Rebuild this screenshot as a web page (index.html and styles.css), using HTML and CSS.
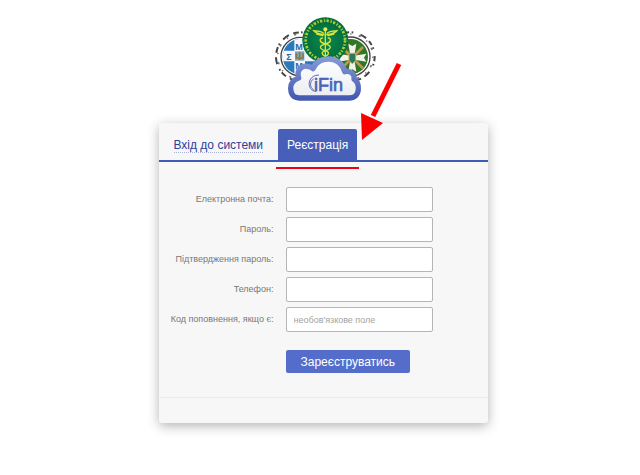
FILE: index.html
```html
<!DOCTYPE html>
<html lang="uk">
<head>
<meta charset="utf-8">
<meta name="viewport" content="width=device-width, initial-scale=1">
<title>iFin</title>
<link rel="stylesheet" href="styles.css">
</head>
<body>
<header class="brand">
  <svg class="logo" viewBox="-6 0 360 300" role="img" aria-label="iFin">
    <defs>
      <linearGradient id="rim" x1="0" y1="0" x2="0" y2="1">
        <stop offset="0" stop-color="#8298d6"/>
        <stop offset="1" stop-color="#4659b2"/>
      </linearGradient>
      <linearGradient id="sky" x1="0" y1="0" x2="0" y2="1">
        <stop offset="0" stop-color="#ffffff"/>
        <stop offset="1" stop-color="#e9ecf1"/>
      </linearGradient>
      <radialGradient id="leaf">
        <stop offset="0" stop-color="#0b8a50"/>
        <stop offset="1" stop-color="#00683a"/>
      </radialGradient>
      <clipPath id="left-disc"><circle cx="106" cy="140" r="53"/></clipPath>
    </defs>
    <!-- statistics seal -->
    <circle cx="106" cy="140" r="73" fill="none" stroke="#444" stroke-width="6" stroke-dasharray="17 7 5 16 21 14"/>
    <circle cx="106" cy="140" r="68" fill="none" stroke="#777" stroke-width="5" stroke-dasharray="4 20 7 24"/>
    <circle cx="106" cy="140" r="58" fill="#fff" stroke="#444" stroke-width="4"/>
    <g clip-path="url(#left-disc)">
      <rect x="50" y="84" width="112" height="112" fill="#2b79bd"/>
      <path d="M88 84h32v112H88zM50 122h112v32H50z" fill="#f4f8fc"/>
      <rect x="90" y="124" width="28" height="28" fill="#7fa6c5"/>
      <path d="M94 130v14h20v-14M104 126v24" fill="none" stroke="#8c7940" stroke-width="5"/>
      <text class="seal" x="102" y="120" text-anchor="middle">M</text>
      <text class="seal" x="72" y="149" text-anchor="middle">Σ</text>
      <text class="seal" x="102" y="178" text-anchor="middle">M</text>
    </g>
    <!-- customs seal -->
    <circle cx="256" cy="140" r="73" fill="none" stroke="#444" stroke-width="6" stroke-dasharray="14 8 5 22 20 12"/>
    <circle cx="256" cy="140" r="68" fill="none" stroke="#777" stroke-width="5" stroke-dasharray="4 22 7 20"/>
    <circle cx="256" cy="140" r="59" fill="#fff" stroke="#444" stroke-width="4"/>
    <circle cx="256" cy="140" r="53" fill="#317629"/>
    <g transform="translate(262 143)">
      <path d="M-32-32L32 32M32-32L-32 32" stroke="#b99b50" stroke-width="8"/>
      <path d="M-12-42l12 7 12-7-6 36 36-6-7 12 7 12-36-6 6 36-12-7-12 7 6-36-36 6 7-12-7-12 36 6z" fill="#f2f2e8"/>
      <path d="M-10-13h20v22l-10 9-10-9z" fill="#2f7954" stroke="#c4a753" stroke-width="3"/>
    </g>
    <!-- tax seal -->
    <circle cx="181" cy="91" r="69" fill="url(#leaf)"/>
    <circle cx="181" cy="91" r="59" fill="none" stroke="#a8ce3d" stroke-width="8" stroke-dasharray="7 5 4 4"/>
    <circle cx="181" cy="91" r="65" fill="none" stroke="#4e942e" stroke-width="3" stroke-dasharray="5 6"/>
    <g fill="none" stroke="#d6e33c" stroke-width="4" stroke-linecap="round">
      <path d="M181 58v86"/>
      <path d="M177 74c-10-3-24-2-31-12 10 2 20-1 29 7M185 74c10-3 24-2 31-12-10 2-20-1-29 7M155 72l18 5M207 72l-18 5"/>
      <path d="M172 84c-11 3-8 14 9 18 20 5 19 14 0 20-15 5-10 12 0 17M190 84c11 3 8 14-9 18-20 5-19 14 0 20 15 5 10 12 0 17"/>
    </g>
    <circle cx="181" cy="58" r="6" fill="#e6ed55"/>
    <!-- cloud -->
    <path d="M103 264C82 264 77 248 77 235C77 218 88 208 101 204C94 182 109 166 127 169C134 170 140 172 144 176C153 155 169 147 190 147C216 147 234 163 239 185C256 181 270 192 267 208C277 214 281 225 280 238C279 254 268 264 252 264Z" fill="url(#sky)" stroke="url(#rim)" stroke-width="16" stroke-linejoin="round"/>
    <path d="M162 195c-38 0-38 49-8 49M146 206c-13 9-12 27 0 33" fill="none" stroke="#5268bd" stroke-width="3"/>
    <text class="wordmark" x="147" y="242">iFin</text>
  </svg>
</header>

<main class="card">
  <nav class="tabs">
    <a class="tab" href="#login"><span class="tab-label">Вхід до системи</span></a>
    <a class="tab tab-active" href="#register" aria-current="page">Реєстрація</a>
  </nav>
  <form class="form">
    <label class="label" for="email">Електронна почта:</label>
    <input class="field" id="email" type="email">
    <label class="label" for="password">Пароль:</label>
    <input class="field" id="password" type="password">
    <label class="label" for="confirm">Підтвердження пароль:</label>
    <input class="field" id="confirm" type="password">
    <label class="label" for="phone">Телефон:</label>
    <input class="field" id="phone" type="tel">
    <label class="label" for="code">Код поповнення, якщо є:</label>
    <input class="field" id="code" type="text" placeholder="необов'язкове поле">
    <button class="submit" type="submit">Зареєструватись</button>
  </form>
  <footer class="card-footer"></footer>
  <svg class="arrow" viewBox="0 0 42 80" aria-hidden="true">
    <path d="M38 2L12 54" stroke="#fb0000" stroke-width="5"/>
    <path d="M0 51L22 61L1 78Z" fill="#fb0000"/>
  </svg>
</main>
</body>
</html>
```
FILE: styles.css
```css
* {
  box-sizing: border-box;
}

body {
  margin: 0;
  padding: 10px 0 32px 6px;
  display: flex;
  flex-direction: column;
  align-items: center;
  gap: 13px;
  background: #fff;
  font-family: "Liberation Sans", Arial, sans-serif;
  font-size: 12px;
  color: #777;
}

.logo {
  display: block;
  width: 120px;
  height: 100px;
}

.seal {
  font-size: 27px;
  font-weight: bold;
  fill: #2b68a8;
}

.wordmark {
  font-size: 54px;
  fill: #4c61b8;
  stroke: #4c61b8;
  stroke-width: 2px;
}

.card {
  position: relative;
  width: 100%;
  max-width: 329px;
  background: #f7f7f7;
  border-radius: 3px;
  box-shadow: 0 3px 12px rgba(0, 0, 0, 0.3);
}

.tabs {
  display: flex;
  gap: 5px;
  padding: 6px 5px 0;
  border-bottom: 2px solid #3c5cb8;
}

.tab {
  position: relative;
  padding: 2px 10px 0;
  line-height: 29px;
  color: #2c3f9c;
  text-decoration: none;
}

.tab-label {
  border-bottom: 1px dotted #a9b3dc;
}

.tab-active {
  padding: 2px 9px 0;
  background: #475fb8;
  border-radius: 2px 2px 0 0;
  color: #fff;
}

.tab-active::after {
  content: "";
  position: absolute;
  top: 38px;
  left: -2px;
  right: -2px;
  height: 2px;
  background: #f00016;
}

.form {
  display: grid;
  grid-template-columns: 115px 147px;
  column-gap: 12px;
  row-gap: 5px;
  padding: 25px 0 24px;
}

.label {
  font-size: 9px;
  line-height: 25px;
  text-align: right;
  white-space: nowrap;
}

.field {
  width: 100%;
  height: 25px;
  padding: 0 7px;
  border: 1px solid #b5b5b5;
  border-radius: 2px;
  background: #fff;
  font-family: inherit;
  font-size: 9px;
  color: #444;
}

.field::placeholder {
  color: #a3a3a3;
  opacity: 1;
}

.submit {
  grid-column: 2;
  justify-self: start;
  margin-top: 13px;
  height: 23px;
  padding: 0 15px;
  border: 0;
  border-radius: 2px;
  background: #546dca;
  font: inherit;
  color: #fff;
}

.card-footer {
  height: 26px;
  border-top: 1px solid #ececec;
}

.arrow {
  position: absolute;
  top: -61px;
  right: 85px;
  width: 42px;
  height: 80px;
}
```
